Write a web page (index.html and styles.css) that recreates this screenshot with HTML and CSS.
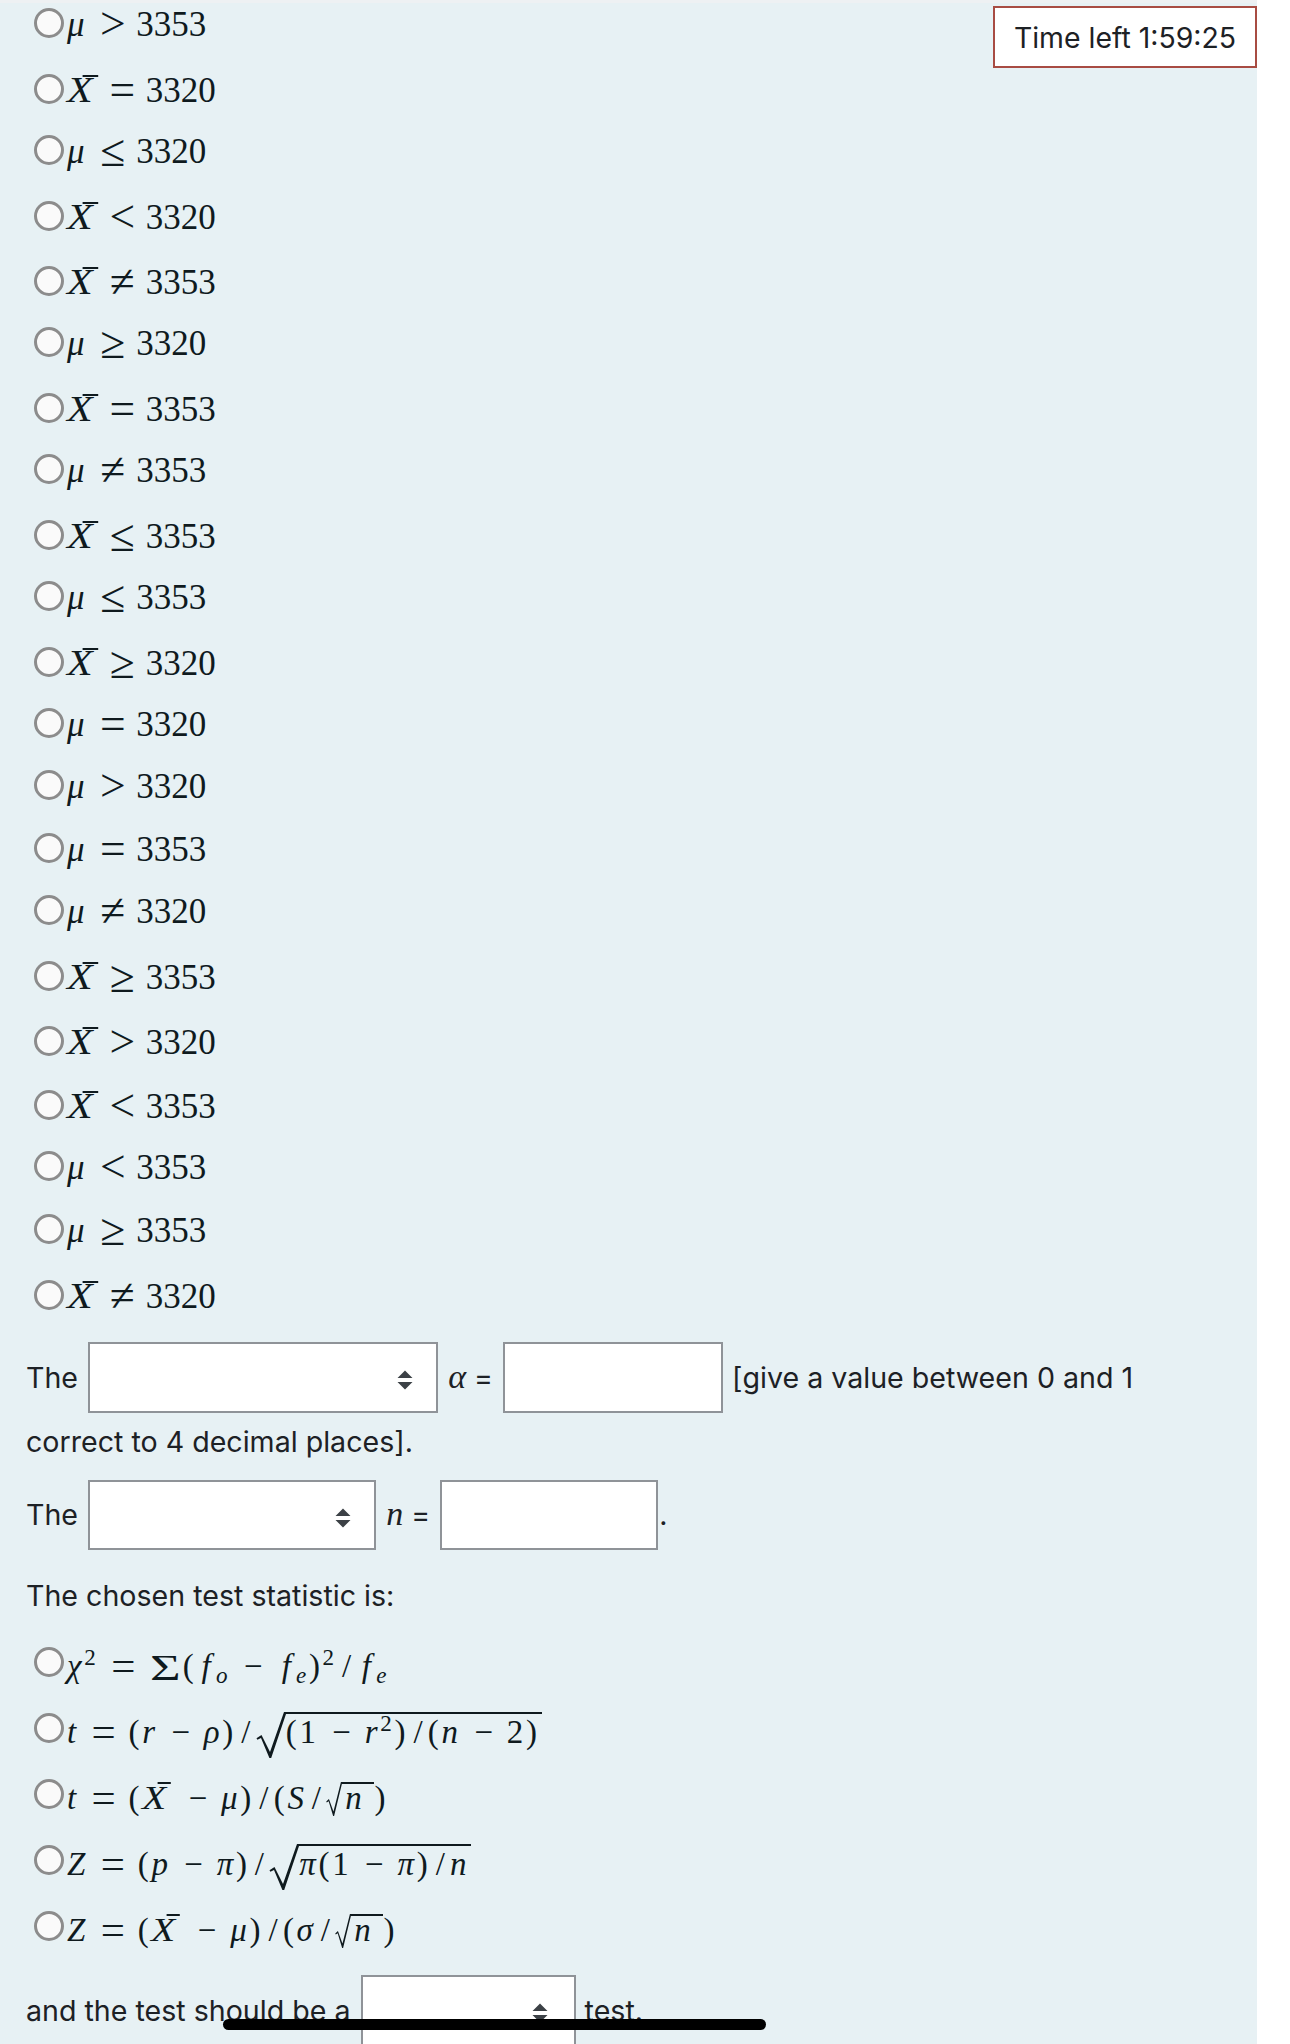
FILE: index.html
```html
<!DOCTYPE html>
<html lang="en">
<head>
<meta charset="utf-8">
<title>Quiz</title>
<link rel="stylesheet" href="styles.css">
</head>
<body>
<div class="timer">Time left 1:59:25</div>
<div class="formulation">
  <div class="opts">
    <div class="opt"><span class="radio"></span><span class="math"><span class="mi mu">μ</span><span class="rel">&gt;</span>3353</span></div>
    <div class="opt tall"><span class="radio"></span><span class="math"><span class="mi xbar">X</span><span class="rel">=</span>3320</span></div>
    <div class="opt"><span class="radio"></span><span class="math"><span class="mi mu">μ</span><span class="rel">≤</span>3320</span></div>
    <div class="opt tall"><span class="radio"></span><span class="math"><span class="mi xbar">X</span><span class="rel">&lt;</span>3320</span></div>
    <div class="opt tall"><span class="radio"></span><span class="math"><span class="mi xbar">X</span><span class="rel">≠</span>3353</span></div>
    <div class="opt"><span class="radio"></span><span class="math"><span class="mi mu">μ</span><span class="rel">≥</span>3320</span></div>
    <div class="opt tall"><span class="radio"></span><span class="math"><span class="mi xbar">X</span><span class="rel">=</span>3353</span></div>
    <div class="opt"><span class="radio"></span><span class="math"><span class="mi mu">μ</span><span class="rel">≠</span>3353</span></div>
    <div class="opt tall"><span class="radio"></span><span class="math"><span class="mi xbar">X</span><span class="rel">≤</span>3353</span></div>
    <div class="opt"><span class="radio"></span><span class="math"><span class="mi mu">μ</span><span class="rel">≤</span>3353</span></div>
    <div class="opt tall"><span class="radio"></span><span class="math"><span class="mi xbar">X</span><span class="rel">≥</span>3320</span></div>
    <div class="opt"><span class="radio"></span><span class="math"><span class="mi mu">μ</span><span class="rel">=</span>3320</span></div>
    <div class="opt"><span class="radio"></span><span class="math"><span class="mi mu">μ</span><span class="rel">&gt;</span>3320</span></div>
    <div class="opt"><span class="radio"></span><span class="math"><span class="mi mu">μ</span><span class="rel">=</span>3353</span></div>
    <div class="opt"><span class="radio"></span><span class="math"><span class="mi mu">μ</span><span class="rel">≠</span>3320</span></div>
    <div class="opt tall"><span class="radio"></span><span class="math"><span class="mi xbar">X</span><span class="rel">≥</span>3353</span></div>
    <div class="opt tall"><span class="radio"></span><span class="math"><span class="mi xbar">X</span><span class="rel">&gt;</span>3320</span></div>
    <div class="opt tall"><span class="radio"></span><span class="math"><span class="mi xbar">X</span><span class="rel">&lt;</span>3353</span></div>
    <div class="opt"><span class="radio"></span><span class="math"><span class="mi mu">μ</span><span class="rel">&lt;</span>3353</span></div>
    <div class="opt"><span class="radio"></span><span class="math"><span class="mi mu">μ</span><span class="rel">≥</span>3353</span></div>
    <div class="opt tall"><span class="radio"></span><span class="math"><span class="mi xbar">X</span><span class="rel">≠</span>3320</span></div>
  </div>

  <p class="line first">The <span class="sel w1"><svg class="arrows" viewBox="0 0 16 20"><path d="M8 0.5 L15.5 8 L0.5 8 Z M0.5 12 L15.5 12 L8 19.5 Z"/></svg></span> <span class="m mi">α</span> = <span class="sel i1"></span> [give a value between 0 and 1 correct to 4 decimal places].</p>

  <p class="line">The <span class="sel w2"><svg class="arrows" viewBox="0 0 16 20"><path d="M8 0.5 L15.5 8 L0.5 8 Z M0.5 12 L15.5 12 L8 19.5 Z"/></svg></span> <span class="m mi">n</span> = <span class="sel i2"></span>.</p>

  <p class="line">The chosen test statistic is:</p>

  <div class="opts stats">
    <div class="opt stat"><span class="radio"></span><span class="math"><span class="mi">χ</span><sup class="sup">2</sup><span class="rel">=</span><span class="big">Σ</span>(<span class="mi f">f</span><sub class="sub mi">o</sub><span class="bin">−</span><span class="mi f">f</span><sub class="sub mi">e</sub>)<sup class="sup">2</sup><span class="sl">/</span><span class="mi f">f</span><sub class="sub mi">e</sub></span></div>
    <div class="opt stat"><span class="radio"></span><span class="math"><span class="mi">t</span><span class="rel">=</span>(<span class="mi">r</span><span class="bin">−</span><span class="mi">ρ</span>)<span class="sl">/</span><span class="sqrt"><svg class="rad" viewBox="0 0 30 50" preserveAspectRatio="none"><path d="M0.5 28.5 L5.5 25 L14 43.5 L28 0 L30 0 L30 2.2 L15.2 50 L13.4 50 L5 28.2 L1.4 30.2 Z"/></svg><span class="rb">(1<span class="bin">−</span><span class="mi">r</span><sup class="sup">2</sup>)<span class="sl">/</span>(<span class="mi">n</span><span class="bin">−</span>2)</span></span></span></div>
    <div class="opt stat"><span class="radio"></span><span class="math"><span class="mi">t</span><span class="rel">=</span>(<span class="mi xbar">X</span><span class="bin">−</span><span class="mi">μ</span>)<span class="sl">/</span>(<span class="mi">S</span><span class="sl">/</span><span class="sqrt sm"><svg class="rad" viewBox="0 0 30 50" preserveAspectRatio="none"><path d="M0.5 28.5 L5.5 25 L14 43.5 L28 0 L30 0 L30 2.2 L15.2 50 L13.4 50 L5 28.2 L1.4 30.2 Z"/></svg><span class="rb"><span class="mi">n</span></span></span>)</span></div>
    <div class="opt stat"><span class="radio"></span><span class="math"><span class="mi">Z</span><span class="rel">=</span>(<span class="mi">p</span><span class="bin">−</span><span class="mi">π</span>)<span class="sl">/</span><span class="sqrt"><svg class="rad" viewBox="0 0 30 50" preserveAspectRatio="none"><path d="M0.5 28.5 L5.5 25 L14 43.5 L28 0 L30 0 L30 2.2 L15.2 50 L13.4 50 L5 28.2 L1.4 30.2 Z"/></svg><span class="rb"><span class="mi">π</span>(1<span class="bin">−</span><span class="mi">π</span>)<span class="sl">/</span><span class="mi">n</span></span></span></span></div>
    <div class="opt stat"><span class="radio"></span><span class="math"><span class="mi">Z</span><span class="rel">=</span>(<span class="mi xbar">X</span><span class="bin">−</span><span class="mi">μ</span>)<span class="sl">/</span>(<span class="mi">σ</span><span class="sl">/</span><span class="sqrt sm"><svg class="rad" viewBox="0 0 30 50" preserveAspectRatio="none"><path d="M0.5 28.5 L5.5 25 L14 43.5 L28 0 L30 0 L30 2.2 L15.2 50 L13.4 50 L5 28.2 L1.4 30.2 Z"/></svg><span class="rb"><span class="mi">n</span></span></span>)</span></div>
  </div>

  <p class="line last">and the test should be a <span class="sel w3"><svg class="arrows" viewBox="0 0 16 20"><path d="M8 0.5 L15.5 8 L0.5 8 Z M0.5 12 L15.5 12 L8 19.5 Z"/></svg></span> test.</p>
</div>
<div class="redact"></div>
</body>
</html>
```

FILE: styles.css
```css
html, body {
  margin: 0;
  padding: 0;
}
body {
  width: 1290px;
  height: 2044px;
  overflow: hidden;
  position: relative;
  background: #ffffff;
  font-family: Inter, "Noto Sans", "Liberation Sans", sans-serif;
  font-size: 28.6px;
  color: #1d2125;
}
.formulation {
  width: 1257px;
  min-height: 2044px;
  box-sizing: border-box;
  padding: 0 30px 0 26px;
  background: #e7f1f4;
  box-shadow: inset 0 3px 0 #eef1f3;
}

/* radio options */
.opt {
  display: flex;
  align-items: flex-start;
  height: 62.5px;
  padding-top: 8px;
  box-sizing: border-box;
}
.opt.tall {
  height: 64.5px;
  padding-top: 11.5px;
}
.radio {
  flex: none;
  width: 30px;
  height: 30px;
  box-sizing: border-box;
  border: 3px solid #8c8c8c;
  border-radius: 50%;
  background: #fafafa;
  margin-left: 8px;
}
.math {
  margin-left: 3px;
  margin-top: 2px;
  font-family: "Liberation Serif", "DejaVu Serif", serif;
  font-size: 35px;
  line-height: 30px;
  white-space: nowrap;
  color: #0f1a1e;
}
.mi {
  font-style: italic;
}
.mu {
  margin-right: 0.14em;
}
.xbar {
  position: relative;
  display: inline-block;
  transform: scaleX(1.2);
  transform-origin: left center;
  margin-right: 0.3em;
}
.xbar::after {
  content: "";
  position: absolute;
  left: 0.38em;
  width: 0.36em;
  top: -1px;
  height: 2px;
  background: currentColor;
}
.rel {
  display: inline-block;
  font-size: 1.3em;
  line-height: 0;
  width: 0.6em;
  text-align: center;
  margin: 0 0.214em;
  vertical-align: -0.07em;
  letter-spacing: 0;
}
.bin {
  display: inline-block;
  width: 0.9em;
  text-align: center;
  margin: 0 0.25em;
  letter-spacing: 0;
}
.sl {
  display: inline-block;
  width: 0.6em;
  text-align: center;
  letter-spacing: 0;
}
.f {
  padding: 0 0.08em 0 0.16em;
}
.sup {
  font-size: 0.7em;
  line-height: 0;
  vertical-align: 0.5em;
}
.sub {
  font-size: 0.7em;
  line-height: 0;
  vertical-align: -0.25em;
}
.big {
  display: inline-block;
  font-size: 1.1em;
  line-height: 0;
  vertical-align: -0.08em;
  font-style: normal;
  transform: scaleX(1.45);
  transform-origin: left center;
  margin: 0 0.32em 0 0.05em;
  letter-spacing: 0;
}

/* statistic rows */
.opt.stat {
  height: 66px;
  padding-top: 13px;
}
.stat .math {
  font-size: 33px;
  margin-top: 4px;
  letter-spacing: 0.08em;
}
.stat .rel {
  margin: 0 0.28em;
}
.sqrt {
  position: relative;
  display: inline-block;
  padding-left: 30px;
  margin-top: -12px;
}
.sqrt .rad {
  position: absolute;
  left: 0;
  top: 0;
  width: 30px;
  height: calc(100% + 11px);
  fill: currentColor;
}
.sqrt .rb {
  display: inline-block;
  border-top: 2px solid currentColor;
  padding-top: 3px;
  padding-right: 2px;
  line-height: 30px;
}
.sqrt.sm {
  padding-left: 16px;
  line-height: 22px;
  margin-top: -6px;
}
.sqrt.sm .rad {
  width: 16px;
  height: calc(100% + 7px);
}
.sqrt.sm .rb {
  line-height: 22px;
  padding: 3px 10px 0 3px;
}

/* text lines with controls */
.line {
  margin: 0 0 17px;
  line-height: 42px;
}
.line.first {
  margin-top: 9.5px;
}
.line.last {
  margin-top: 11px;
}
.m {
  font-family: "Liberation Serif", "DejaVu Serif", serif;
  font-size: 34px;
  margin-left: 1px;
}
.sel {
  display: inline-block;
  overflow: hidden;
  box-sizing: border-box;
  height: 71px;
  border: 2px solid #8f9398;
  background: #ffffff;
  vertical-align: -33px;
  margin: 0 1px 8px 2px;
  line-height: 67px;
  text-align: right;
  padding-right: 23px;
}
.w1 { width: 350px; }
.w2 { width: 288px; height: 70px; }
.w3 { width: 215px; padding-right: 26px; }
.i1 { width: 220px; }
.i2 { width: 218px; height: 70px; }
.arrows {
  width: 16px;
  height: 20px;
  vertical-align: middle;
  fill: #3c4146;
}

/* overlays */
.timer {
  position: absolute;
  top: 6px;
  left: 993px;
  width: 264px;
  height: 62px;
  box-sizing: border-box;
  border: 2px solid #a84c43;
  background: #ffffff;
  display: flex;
  align-items: center;
  justify-content: center;
  font-size: 28.4px;
  color: #1d2125;
}
.redact {
  position: absolute;
  left: 223px;
  top: 2019px;
  width: 543px;
  height: 11px;
  border-radius: 6px;
  background: #000000;
}
```
